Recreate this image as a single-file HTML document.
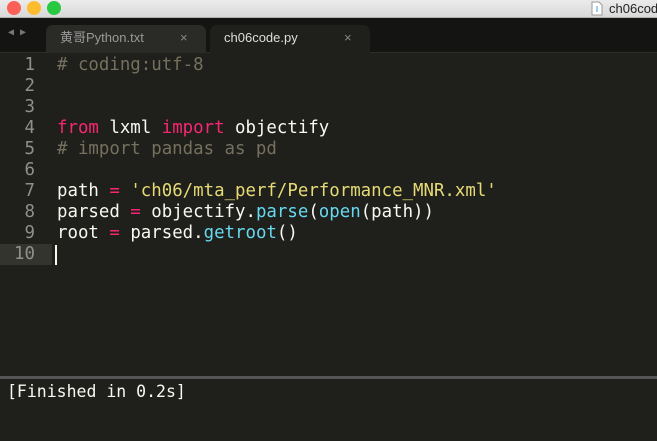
<!DOCTYPE html>
<html><head><meta charset="utf-8"><style>
*{margin:0;padding:0;box-sizing:border-box}
body{width:657px;height:441px;overflow:hidden;background:#1f1f1c;position:relative;font-family:"DejaVu Sans Mono","Liberation Mono",monospace}
#title{position:absolute;left:0;top:0;width:657px;height:18px;background:linear-gradient(#ececec,#d8d8d8);border-bottom:1px solid #b0b0b0}
.dot{position:absolute;top:1px;width:14px;height:14px;border-radius:50%}
#tabs{position:absolute;left:0;top:18px;width:657px;height:35px;background:#141412;border-bottom:1px solid #2c2c29}
.tab{position:absolute;top:7px;height:28px;border-radius:7px 7px 0 0;font-family:"Liberation Sans","Noto Sans CJK SC",sans-serif;font-size:13px;line-height:26px}
#code{position:absolute;left:0;top:55px;width:657px;height:321px;background:#1f1f1c}
.ln{position:absolute;left:0;width:50px;text-align:right;padding-right:15px;color:#8f908a;font-size:17.4px;height:21px;line-height:21px}
.cl{position:absolute;left:57px;color:#f8f8f2;font-size:17.4px;height:21px;line-height:21px;white-space:pre}
.k{color:#f92672}.c{color:#75715e}.s{color:#e6db74}.f{color:#66d9ef}
#out{position:absolute;left:0;top:376px;width:657px;height:65px;background:#1f1f1c;border-top:3px solid #555}
</style></head><body>
<div id="title">
<div class="dot" style="left:7px;background:#fc5f57"></div>
<div class="dot" style="left:27px;background:#fdbc2e"></div>
<div class="dot" style="left:47px;background:#28c840"></div>
<svg style="position:absolute;left:591px;top:1px" width="12" height="15"><path d="M1 1h7l3 3v10H1z" fill="#fff" stroke="#999"/><path d="M6 5v6" stroke="#3a9be8"/></svg>
<div style="position:absolute;left:609px;top:0;font-family:'Liberation Sans',sans-serif;font-size:13px;line-height:17px;color:#222">ch06code.py</div>
</div>
<div id="tabs">
<div style="position:absolute;left:8px;top:9px;color:#777;font-size:10px">◀ ▶</div>
<div class="tab" style="left:46px;width:160px;background:#2a2a27;color:#999;padding-left:14px">黄哥Python.txt<span style="position:absolute;left:134px;color:#888">×</span></div>
<div class="tab" style="left:210px;width:160px;background:#1f1f1c;color:#ddd;padding-left:14px">ch06code.py<span style="position:absolute;left:134px;color:#888">×</span></div>
</div>
<div id="code">
<div style="position:absolute;left:0;top:189px;width:52px;height:21px;background:#34342f"></div>
<div style="position:absolute;left:55px;top:190px;width:2px;height:20px;background:#f8f8f0"></div>
<div class="ln" style="top:0px">1</div><div class="cl c" style="top:0px"># coding:utf-8</div>
<div class="ln" style="top:21px">2</div>
<div class="ln" style="top:42px">3</div>
<div class="ln" style="top:63px">4</div><div class="cl" style="top:63px"><span class="k">from</span> lxml <span class="k">import</span> objectify</div>
<div class="ln" style="top:84px">5</div><div class="cl c" style="top:84px"># import pandas as pd</div>
<div class="ln" style="top:105px">6</div>
<div class="ln" style="top:126px">7</div><div class="cl" style="top:126px">path <span class="k">=</span> <span class="s">'ch06/mta_perf/Performance_MNR.xml'</span></div>
<div class="ln" style="top:147px">8</div><div class="cl" style="top:147px">parsed <span class="k">=</span> objectify.<span class="f">parse</span>(<span class="f">open</span>(path))</div>
<div class="ln" style="top:168px">9</div><div class="cl" style="top:168px">root <span class="k">=</span> parsed.<span class="f">getroot</span>()</div>
<div class="ln" style="top:189px">10</div>
</div>
<div id="out"><div style="position:absolute;left:7px;top:2px;color:#f8f8f2;font-size:16.5px;line-height:21px">[Finished in 0.2s]</div></div>
</body></html>
